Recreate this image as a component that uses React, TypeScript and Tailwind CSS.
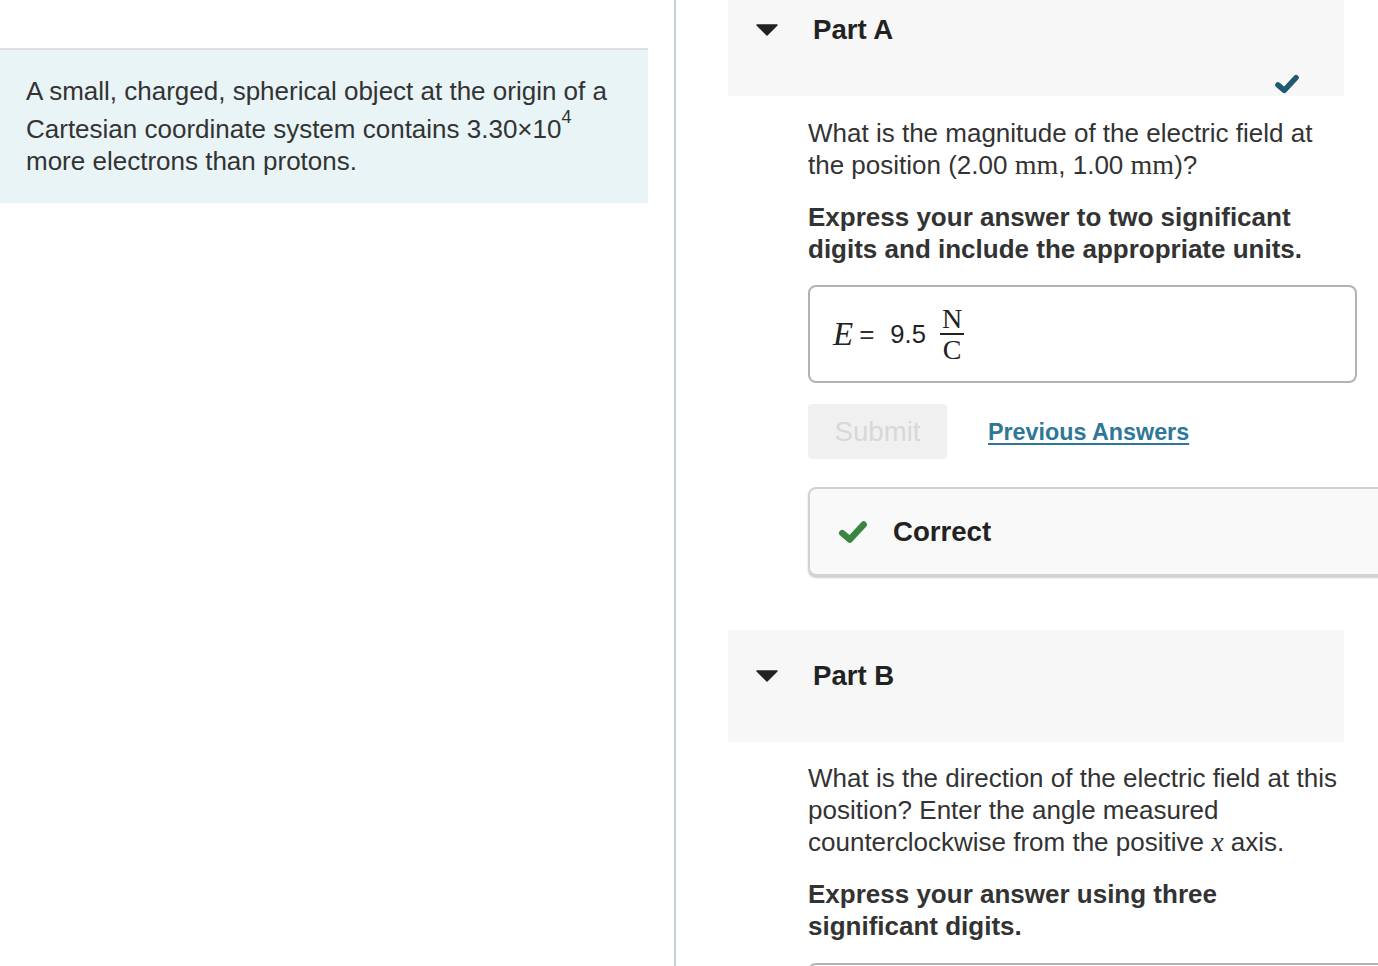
import React from "react";

const sans = { fontFamily: '"Liberation Sans", Arial, Helvetica, sans-serif' };
const serif = { fontFamily: '"Liberation Serif", "Times New Roman", serif' };

function Triangle() {
  return (
    <svg width="22" height="12" viewBox="0 0 22 12" className="shrink-0">
      <path d="M1 1 L21 1 L11 11 Z" fill="#222" stroke="#222" strokeWidth="1.5" strokeLinejoin="round" />
    </svg>
  );
}

function Check({ color, w, h }: { color: string; w: number; h: number }) {
  return (
    <svg width={w} height={h} viewBox="0 0 28 22">
      <path d="M4 12 L11 18 L24 4" fill="none" stroke={color} strokeWidth="6" strokeLinecap="round" strokeLinejoin="round" />
    </svg>
  );
}

function PartHeader({ title, check }: { title: string; check?: boolean }) {
  return (
    <div className="ml-[52px] w-[616px] h-[112px] bg-[#f7f7f7] flex flex-col shrink-0">
      <div className="flex items-center pt-[30px] h-[62px]">
        <div className="ml-[28px] w-[22px] flex items-center">
          <Triangle />
        </div>
        <div className="ml-[35px] text-[27.6px] leading-[32px] font-bold text-[#222]">{title}</div>
      </div>
      {check && (
        <div className="flex justify-end pr-[44px] mt-[28px]">
          <Check color="#1f5a72" w={26} h={20} />
        </div>
      )}
    </div>
  );
}

export default function App() {
  return (
    <div
      className="w-[1378px] h-[966px] overflow-hidden bg-white flex text-[#333] text-[26px] leading-[32px]"
      style={sans}
    >
      {/* Left column */}
      <div className="w-[648px] shrink-0 pt-[48px]">
        <div className="border-t-2 border-[#dedede] bg-[#e8f4f6] pl-[26px] pr-[20px] pt-[25px] pb-[26px]">
          <p>
            A small, charged, spherical object at the origin of a Cartesian coordinate system contains 3.30×10
            <sup className="static text-[18px] leading-[20px] align-[15px]">4</sup> more electrons than protons.
          </p>
        </div>
      </div>

      {/* Divider */}
      <div className="ml-[26px] w-[2px] h-full bg-[#c5cfdc] shrink-0" />

      {/* Right column */}
      <div className="flex-1 min-w-0 flex flex-col mt-[-16px]">
        <PartHeader title="Part A" check />

        <div className="ml-[132px] w-[560px] pt-[21px]">
          <p className="w-[536px]">
            What is the magnitude of the electric field at the position (2.00{" "}
            <span className="text-[28px] leading-[20px]" style={serif}>mm</span>, 1.00{" "}
            <span className="text-[28px] leading-[20px]" style={serif}>mm</span>)?
          </p>
          <p className="w-[536px] mt-[20px] font-bold">
            Express your answer to two significant digits and include the appropriate units.
          </p>

          <div className="mt-[20px] w-[549px] h-[98px] border-2 border-[#b3b3b3] rounded-[8px] flex items-center pl-[23px]">
            <span className="italic text-[33px] leading-none text-[#222]" style={serif}>
              E
            </span>
            <span className="ml-[6px] text-[26px]">=</span>
            <span className="ml-[16px] text-[25.6px] text-[#222]">9.5</span>
            <span className="ml-[14px] inline-flex flex-col items-center text-[28px] leading-[24px] text-[#222]" style={serif}>
              <span className="px-[2px] pb-[2px] border-b-2 border-[#222]">N</span>
              <span className="pt-[3px]">C</span>
            </span>
          </div>

          <div className="mt-[21px] flex items-center">
            <div className="w-[139px] h-[55px] rounded-[4px] bg-[#f0f0f0] text-[#d8d8d8] text-[27.6px] flex items-center justify-center">
              Submit
            </div>
            <a className="ml-[41px] font-bold text-[23.3px] text-[#2e7799] underline underline-offset-[3px] decoration-2">
              Previous Answers
            </a>
          </div>

          <div className="mt-[28px] w-[600px] h-[89px] border-2 border-[#d2d2d2] rounded-[8px] bg-[#f9f9f9] shadow-[0_2px_2px_rgba(0,0,0,0.2)] flex items-center pl-[28px]">
            <Check color="#3a8540" w={30} h={24} />
            <span className="ml-[25px] text-[27.6px] font-bold text-[#222]">Correct</span>
          </div>
        </div>

        <div className="mt-[54px]">
          <PartHeader title="Part B" />
        </div>

        <div className="ml-[132px] w-[560px] pt-[20px]">
          <p className="w-[536px]">
            What is the direction of the electric field at this position? Enter the angle measured counterclockwise
            from the positive{" "}
            <span className="italic text-[28px] leading-[20px]" style={serif}>
              x
            </span>{" "}
            axis.
          </p>
          <p className="w-[536px] mt-[20px] font-bold">Express your answer using three significant digits.</p>
          <div className="mt-[21px] w-[600px] h-[80px] border-2 border-[#b3b3b3] rounded-[8px]" />
        </div>
      </div>
    </div>
  );
}
